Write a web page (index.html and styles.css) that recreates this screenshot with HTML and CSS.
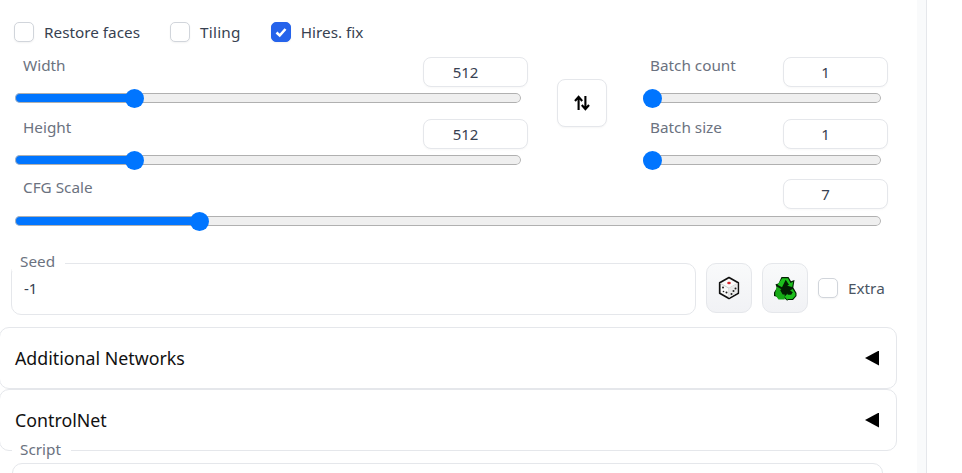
FILE: index.html
```html
<!DOCTYPE html>
<html lang="en">
<head>
<meta charset="utf-8">
<title>txt2img settings</title>
<link rel="stylesheet" href="styles.css">
</head>
<body>
<div class="page">
  <main class="panel">
    <div class="checks">
      <label class="check"><input type="checkbox"><span>Restore faces</span></label>
      <label class="check tiling"><input type="checkbox"><span>Tiling</span></label>
      <label class="check"><input type="checkbox" checked><span>Hires. fix</span></label>
    </div>

    <div class="dims">
      <div class="dims-left">
        <div class="slider">
          <div class="slider-head"><span class="slider-label">Width</span><input class="num" type="text" value="512"></div>
          <input class="range" type="range" min="64" max="2048" step="8" value="512" style="--fill:119px">
        </div>
        <div class="slider second">
          <div class="slider-head"><span class="slider-label">Height</span><input class="num" type="text" value="512"></div>
          <input class="range" type="range" min="64" max="2048" step="8" value="512" style="--fill:119px">
        </div>
      </div>
      <button class="swap" type="button" aria-label="Swap">
        <svg width="16" height="16" viewBox="0 0 16 16"><path d="M4.600 15V2.600M1 6 4.600 1.800 8.200 6M11.400 1v12.400M7.800 10l3.600 4.200 3.600-4.200" fill="none" stroke="#000" stroke-width="2.100"/></svg>
      </button>
      <div class="dims-right">
        <div class="slider">
          <div class="slider-head"><span class="slider-label">Batch count</span><input class="num" type="text" value="1"></div>
          <input class="range" type="range" min="1" max="8" value="1" style="--fill:9px">
        </div>
        <div class="slider second">
          <div class="slider-head"><span class="slider-label">Batch size</span><input class="num" type="text" value="1"></div>
          <input class="range" type="range" min="1" max="8" value="1" style="--fill:9px">
        </div>
      </div>
    </div>

    <div class="slider cfg">
      <div class="slider-head"><span class="slider-label">CFG Scale</span><input class="num" type="text" value="7"></div>
      <input class="range" type="range" min="1" max="30" step="0.5" value="7" style="--fill:184px">
    </div>

    <div class="seed-row">
      <div class="seed">
        <span class="legend">Seed</span>
        <input class="seed-input" type="text" value="-1">
      </div>
      <button class="tool" type="button" aria-label="Random seed">
        <svg width="22" height="24" viewBox="0 0 22 24">
          <path d="M11 1.500 20.300 6.800v10.400L11 22.500 1.700 17.200V6.800z" fill="#fafafa" stroke="#111" stroke-width="1.700" stroke-linejoin="round"/>
          <path d="M2.500 7.500 11 12.200l8.500-4.700M11 12.200v9.500" fill="none" stroke="#cfcfcf" stroke-width="1"/>
          <path d="M11 12.200 19.500 7.500v9.200L11 21.700z" fill="#e9e9e9"/>
          <ellipse cx="11" cy="7" rx="1.800" ry="1.300" fill="#d8262c"/>
          <g fill="#222"><circle cx="5" cy="11.500" r="1"/><circle cx="8.500" cy="16.500" r="1"/><circle cx="5.500" cy="15.500" r=".8"/><circle cx="13.500" cy="18" r="1"/><circle cx="17.500" cy="12.500" r="1"/><circle cx="15.500" cy="15" r="1"/></g>
        </svg>
      </button>
      <button class="tool" type="button" aria-label="Reuse seed">
        <svg width="24" height="25" viewBox="0 0 24 25">
          <path d="M8.500 1h7L18 5.200 21.500 4 20.300 11.500 23.500 17v3L20 24h-5.500v1L10 21H5L1 20v-3.500L3.800 12 2.500 8.300 5.500 7.500z" fill="#021f02"/>
          <path d="M9.200 2.200h5.800L17.500 7l2.700-1.200-1 5.200-5-1.200 1.800-1-3.300-5L9 11.300 4.500 8.700z" fill="#1cc01c"/>
          <path d="M3.800 10.500l4.600 2.800-1.200.9 2.500 4.300h2v5H5.500L2.200 19v-2.300z" fill="#16aa16"/>
          <path d="M19.600 13l2.800 4.200v2.600L19.300 23h-4.700v1.200l-3-3.400 3-3.300v1.300h3.600l1.600-2.500-2.700-1.900z" fill="#1cc01c"/>
        </svg>
      </button>
      <label class="check extra"><input type="checkbox"><span>Extra</span></label>
    </div>

    <section class="card"><h3>Additional Networks</h3><span class="arrow"></span></section>
    <section class="card"><h3>ControlNet</h3><span class="arrow"></span></section>

    <div class="script">
      <span class="legend">Script</span>
    </div>
  </main>
  <div class="strip"></div>
</div>
</body>
</html>
```

FILE: styles.css
```css
* { box-sizing: border-box; }

html, body {
  margin: 0;
  height: 100%;
  background: #fff;
  overflow: hidden;
}

body {
  font-family: "Noto Sans", "Open Sans", sans-serif;
  font-size: 15.300px;
  color: #374151;
}

.page {
  display: flex;
  height: 473px;
  overflow: hidden;
}

.panel {
  width: 917px;
  flex: none;
  padding-top: 22px;
}

.strip {
  width: 10px;
  flex: none;
  background: #f9fafb;
  border-right: 1px solid #e5e7eb;
}

/* checkboxes */
.checks {
  display: flex;
  gap: 30px;
  padding-left: 14px;
  height: 20px;
}

.check {
  display: flex;
  align-items: center;
  gap: 10px;
  line-height: 20px;
}

.tiling { letter-spacing: .25px; }

.check input {
  appearance: none;
  width: 20px;
  height: 20px;
  margin: 0;
  flex: none;
  background: #fff;
  border: 1px solid #d1d5db;
  border-radius: 5px;
  box-shadow: 0 1px 2px rgba(0, 0, 0, .05);
}

.check input:checked {
  background: #2563eb url("data:image/svg+xml,%3Csvg xmlns='http://www.w3.org/2000/svg' viewBox='0 0 20 20'%3E%3Cpath d='M5.500 10.500 8.700 13.500 14.500 7' fill='none' stroke='white' stroke-width='2.600'/%3E%3C/svg%3E") center / 20px no-repeat;
  border-color: #2563eb;
}

/* sliders */
.dims {
  display: flex;
  margin: 15px 0 0 15px;
}

.dims-left { width: 513px; }

.dims-right { width: 245px; }

.swap {
  width: 50px;
  height: 48px;
  margin: 22px 36px 0 29px;
  padding: 0;
  flex: none;
  display: flex;
  align-items: center;
  justify-content: center;
  background: #fff;
  border: 1px solid #e5e7eb;
  border-radius: 8px;
  box-shadow: 0 1px 2px rgba(0, 0, 0, .04);
}

.slider-head {
  display: flex;
  justify-content: space-between;
  height: 30px;
}

.slider-label {
  margin: -5px 0 0 8px;
  line-height: 26px;
  color: #6b7280;
}

.dims-right .slider-label { margin-left: 7px; }

.num {
  width: 105px;
  height: 30px;
  margin: 0;
  padding: 0 20px 0 0;
  text-align: center;
  font: inherit;
  font-size: 15px;
  color: #374151;
  background: #fff;
  border: 1px solid #e5e7eb;
  border-radius: 8px;
  outline: none;
  box-shadow: 0 1px 2px rgba(0, 0, 0, .03);
}

.range {
  display: block;
  appearance: none;
  width: calc(100% - 7px);
  height: 20px;
  margin: 1px 0 0;
  background: transparent;
}

.range::-webkit-slider-runnable-track {
  height: 10px;
  border-radius: 5px;
  box-shadow: inset 0 0 0 1px #b0b0b0;
  background: linear-gradient(#0075ff, #0075ff) left / var(--fill) 100% no-repeat, #efefef;
}

.range::-webkit-slider-thumb {
  appearance: none;
  width: 19px;
  height: 19px;
  margin-top: -4.500px;
  border-radius: 50%;
  background: #0075ff;
}

.second { margin-top: 11px; }

.cfg {
  margin: 9px 0 0 15px;
  width: 873px;
}

.cfg .range { margin-top: 2px; }

/* seed */
.seed-row {
  display: flex;
  align-items: flex-start;
  margin: 32px 0 0 11px;
  height: 52px;
}

.seed {
  position: relative;
  width: 685px;
  height: 52px;
  border: 1px solid #e5e7eb;
  border-radius: 10px;
  margin-right: 10px;
}

.legend {
  position: absolute;
  top: -13px;
  left: 0;
  padding: 0 10px 0 8px;
  line-height: 20px;
  color: #6b7280;
  background: #fff;
}

.seed-input {
  width: 100%;
  height: 100%;
  padding: 0 12px 2px;
  font: inherit;
  font-size: 15px;
  color: #374151;
  background: none;
  border: 0;
  outline: none;
}

.tool {
  width: 46px;
  height: 50px;
  margin-right: 10px;
  padding: 0;
  flex: none;
  display: flex;
  align-items: center;
  justify-content: center;
  background: linear-gradient(#f9fafb, #f1f2f5);
  border: 1px solid #e5e7eb;
  border-radius: 10px;
}

.extra {
  margin-top: 15px;
  color: #4b5563;
}

/* accordions */
.card {
  display: flex;
  align-items: center;
  justify-content: space-between;
  height: 62px;
  margin-left: -1px;
  padding: 0 17px 0 15px;
  background: #fff;
  border: 1px solid #e5e7eb;
  border-radius: 10px;
  width: 898px;
}

.seed-row + .card { margin-top: 12px; }

.card h3 {
  margin: 0;
  font-size: 17.800px;
  font-weight: 400;
  color: #111;
}

.arrow {
  width: 14px;
  height: 15px;
  background: #000;
  clip-path: polygon(0 50%, 100% 0, 100% 100%);
}

/* script */
.script {
  position: relative;
  width: 871px;
  height: 40px;
  margin: 12px 0 0 12px;
  border: 1px solid #e5e7eb;
  border-radius: 10px;
}

.card + .script .legend {
  top: -25px;
  left: -1px;
}
```
